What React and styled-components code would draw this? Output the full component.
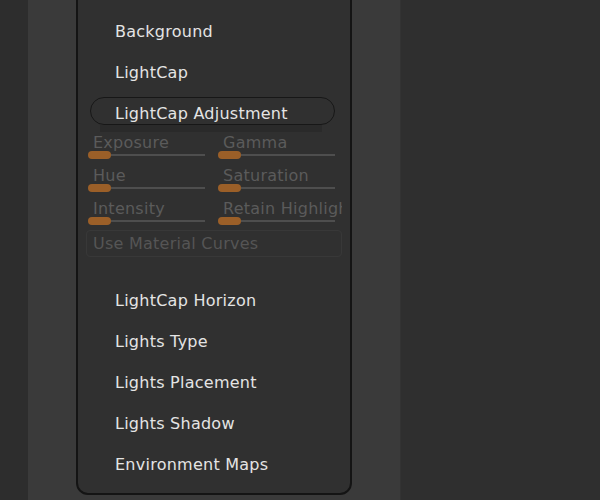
import React from "react";
import styled, { createGlobalStyle } from "styled-components";

const GlobalStyle = createGlobalStyle`
    html, body {
        margin: 0;
        padding: 0;
        background: #2d2d2d;
        overflow: hidden;
    }
    body {
        font-family: "DejaVu Sans", "Liberation Sans", sans-serif;
    }
`;

const sliders = [
    { label: "Exposure" },
    { label: "Gamma" },
    { label: "Hue" },
    { label: "Saturation" },
    { label: "Intensity" },
    { label: "Retain Highlights" },
];

const bottomItems = ["LightCap Horizon", "Lights Type", "Lights Placement", "Lights Shadow", "Environment Maps"];

const App = () => {
    return (
        <>
            <GlobalStyle />
            <Screen>
                <LeftStrip />
                <Column>
                    <Panel>
                        <MenuItem>Background</MenuItem>
                        <MenuItem>LightCap</MenuItem>
                        <PillWrap>
                            <Pill>LightCap Adjustment</Pill>
                            <PillShade />
                        </PillWrap>
                        <SubPanel>
                            <SliderGrid>
                                {sliders.map((s) => (
                                    <Slider key={s.label}>
                                        <SliderLabel>{s.label}</SliderLabel>
                                        <Track>
                                            <Handle />
                                            <Line />
                                        </Track>
                                    </Slider>
                                ))}
                            </SliderGrid>
                            <Toggle>Use Material Curves</Toggle>
                        </SubPanel>
                        <BottomList>
                            {bottomItems.map((item) => (
                                <MenuItem key={item}>{item}</MenuItem>
                            ))}
                        </BottomList>
                    </Panel>
                </Column>
                <RightArea />
            </Screen>
        </>
    );
};

const Screen = styled.div`
    display: flex;
    width: 600px;
    height: 500px;
    overflow: hidden;
`;

const LeftStrip = styled.div`
    width: 28px;
    background: #2d2d2d;
`;

const Column = styled.div`
    width: 324px;
    padding-left: 48px;
    background: #3a3a3a;
    border-right: 1px solid #333;
`;

const RightArea = styled.div`
    flex: 1;
    background: #2f2f2f;
`;

const Panel = styled.div`
    width: 272px;
    margin-top: -31px;
    padding: 40px 0 8px;
    background: #303030;
    border: 2px solid #141414;
    border-radius: 12px;
`;

const MenuItem = styled.div`
    height: 41px;
    line-height: 41px;
    padding-left: 37px;
    color: #e4e4e4;
    font-size: 16px;
    letter-spacing: 0.25px;
    white-space: nowrap;
`;

const PillWrap = styled.div`
    padding-top: 4px;
    margin-left: 12px;
    width: 245px;
`;

const Pill = styled.div`
    box-sizing: border-box;
    height: 28px;
    padding: 6px 0 0 24px;
    line-height: 19px;
    border: 1.5px solid #171717;
    border-radius: 14px;
    color: #e4e4e4;
    font-size: 16px;
    letter-spacing: 0.25px;
    white-space: nowrap;
`;

const PillShade = styled.div`
    height: 7px;
    margin: 0 13px 0 10px;
    background: #2a2a2a;
`;

const SubPanel = styled.div`
    margin: 1px 0 0 8px;
    padding-top: 2px;
    width: 256px;
    overflow: hidden;
`;

const SliderGrid = styled.div`
    display: grid;
    grid-template-columns: 117px 117px;
    column-gap: 13px;
    row-gap: 9px;
    padding-left: 2px;
`;

const Slider = styled.div`
    display: flex;
    flex-direction: column;
`;

const SliderLabel = styled.div`
    height: 19px;
    margin: -2px 0 -1px;
    line-height: 19px;
    padding-left: 5px;
    color: #5b5b5b;
    font-size: 16px;
    letter-spacing: 0.25px;
    white-space: nowrap;
`;

const Track = styled.div`
    display: flex;
    align-items: center;
    height: 8px;
`;

const Handle = styled.div`
    width: 23px;
    height: 8px;
    border-radius: 4px;
    background: #9b5f28;
    flex-shrink: 0;
`;

const Line = styled.div`
    flex: 1;
    height: 2px;
    background: #4e4e4e;
`;

const Toggle = styled.div`
    box-sizing: border-box;
    margin-top: 5px;
    height: 27px;
    line-height: 25px;
    padding-left: 6px;
    border: 1px solid #383838;
    border-radius: 4px;
    color: #555;
    font-size: 16px;
    letter-spacing: 0.25px;
    white-space: nowrap;
`;

const BottomList = styled.div`
    margin-top: 23px;
`;

export default App;
